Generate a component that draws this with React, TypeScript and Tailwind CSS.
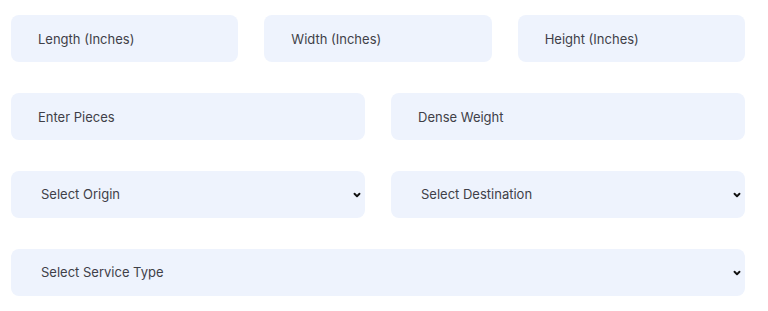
import { ChevronDown } from 'lucide-react';

const field =
  'w-full h-[47px] rounded-lg bg-[#eef3fd] text-[13px] text-[#3f3f48] placeholder:text-[#3f3f48] outline-none';

function Select({ label }: { label: string }) {
  return (
    <div className="relative">
      <select className={`${field} appearance-none pl-[30px] pr-10 pt-px`} defaultValue="">
        <option value="">{label}</option>
      </select>
      <ChevronDown className="absolute right-[3px] top-[19px] text-[#111]" size={10} strokeWidth={4.5} />
    </div>
  );
}

export default function App() {
  return (
    <div className="min-h-screen bg-white px-[11px] pt-[15px] font-['Inter',sans-serif]">
      <div className="w-[734px] flex flex-col gap-[31px]">
        {/* dimensions */}
        <div className="grid grid-cols-3 gap-[26px]">
          <input className={`${field} px-[27px]`} placeholder="Length (Inches)" />
          <input className={`${field} px-[27px]`} placeholder="Width (Inches)" />
          <input className={`${field} px-[27px]`} placeholder="Height (Inches)" />
        </div>

        <div className="grid grid-cols-2 gap-[26px]">
          <input className={`${field} px-[27px]`} placeholder="Enter Pieces" />
          <input className={`${field} px-[27px]`} placeholder="Dense Weight" />
        </div>

        <div className="grid grid-cols-2 gap-[26px]">
          <Select label="Select Origin" />
          <Select label="Select Destination" />
        </div>

        <Select label="Select Service Type" />
      </div>
    </div>
  );
}
